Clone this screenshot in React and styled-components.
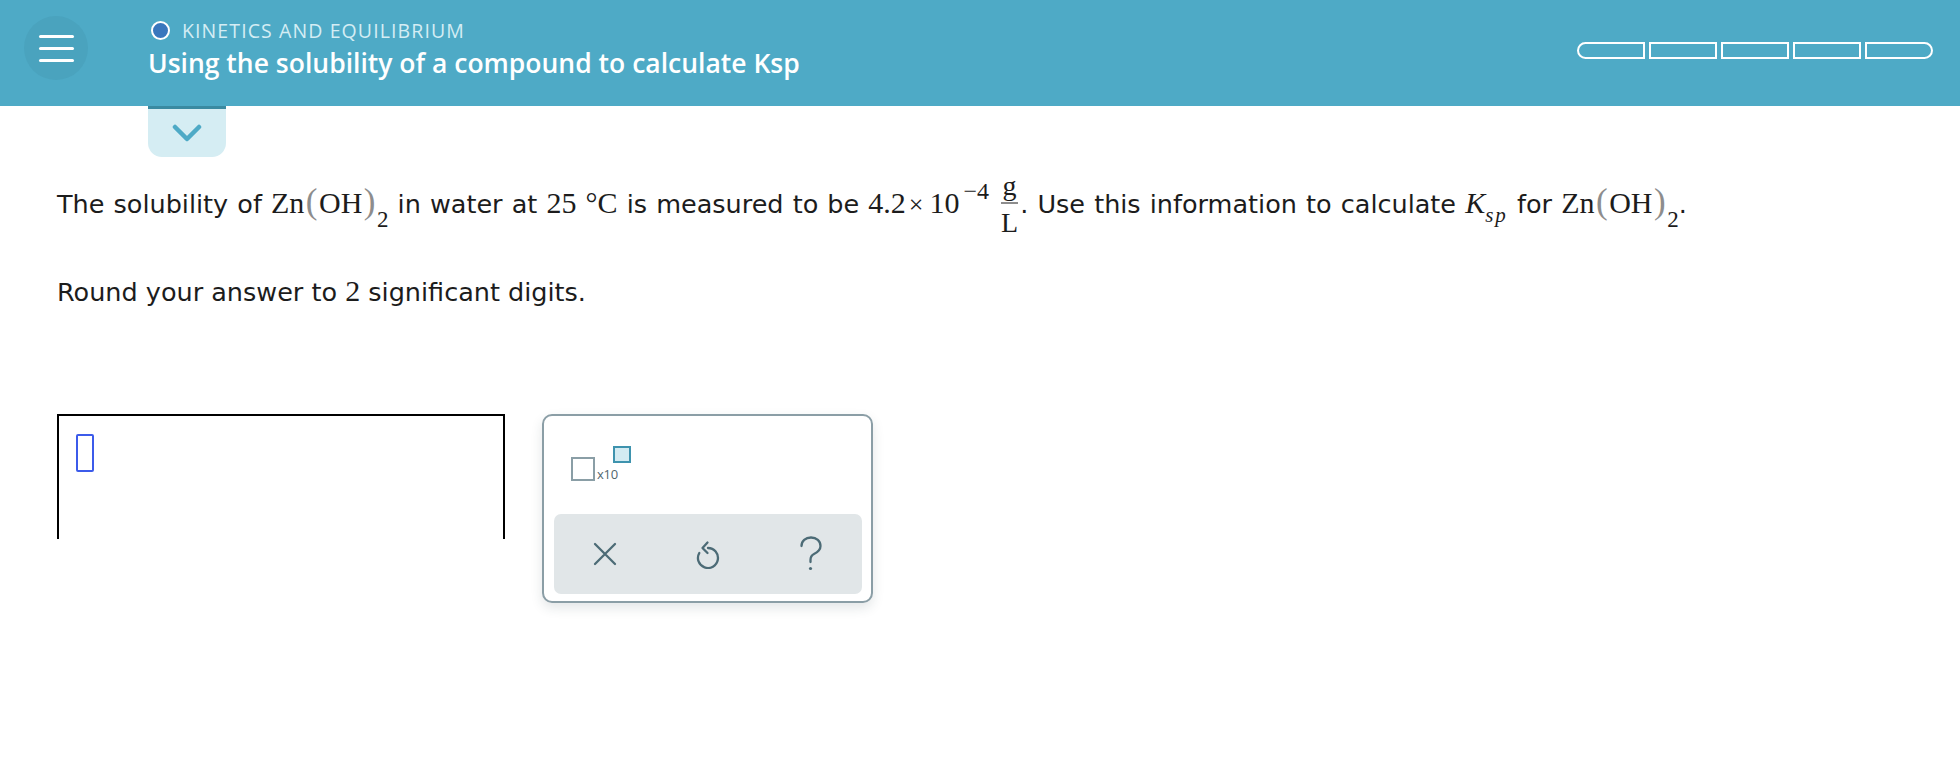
import React from "react";
import styled, { createGlobalStyle } from "styled-components";

const GlobalStyle = createGlobalStyle`
  body {
    margin: 0;
    background: #ffffff;
  }
`;

const Page = styled.div`
  width: 1960px;
  min-height: 776px;
  background: #fff;
`;

/* ---------- header ---------- */

const Header = styled.header`
  height: 106px;
  box-sizing: border-box;
  background: #4eaac6;
  display: flex;
  align-items: flex-start;
  padding: 16px 27px 0 24px;
`;

const MenuButton = styled.button`
  width: 64px;
  height: 64px;
  flex-shrink: 0;
  border: 0;
  padding: 0;
  border-radius: 50%;
  background: #4aa3be;
  display: flex;
  flex-direction: column;
  align-items: center;
  justify-content: center;
  gap: 9px;
`;

const MenuLine = styled.span`
  display: block;
  width: 35px;
  height: 3px;
  border-radius: 2px;
  background: #fff;
`;

const TitleBlock = styled.div`
  margin-left: 60px;
  padding-top: 5px;
  font-family: "Open Sans", Lato, sans-serif;
`;

const Crumb = styled.div`
  display: flex;
  align-items: center;
  gap: 12px;
  height: 19px;
  font-size: 19.5px;
  font-weight: 500;
  letter-spacing: 1.1px;
  line-height: 19px;
  color: #d4edf4;
  text-transform: uppercase;
  margin-left: 3px;
`;

const Dot = styled.span`
  width: 15px;
  height: 15px;
  flex-shrink: 0;
  border-radius: 50%;
  background: #3977bd;
  border: 2px solid #fff;
`;

const Title = styled.h1`
  margin: 6px 0 0;
  font-size: 26.5px;
  font-weight: 600;
  line-height: 34px;
  color: #fff;
`;

const Progress = styled.div`
  margin-left: auto;
  margin-top: 26px;
  display: flex;
  gap: 4px;
`;

const Segment = styled.span`
  width: 68px;
  height: 17px;
  box-sizing: border-box;
  border: 2px solid #fff;
  border-radius: ${(p) =>
    p.$first ? "9px 0 0 9px" : p.$last ? "0 9px 9px 0" : "0"};
`;

const Tab = styled.div`
  margin-left: 148px;
  width: 78px;
  height: 51px;
  box-sizing: border-box;
  background: #d5edf3;
  border-top: 3px solid #3a8aa1;
  border-radius: 0 0 14px 14px;
  display: flex;
  align-items: center;
  justify-content: center;
`;

/* ---------- question ---------- */

const Content = styled.main`
  padding: 27px 56px 0 57px;
  color: #1c1c1c;
  font-family: "DejaVu Sans", Verdana, sans-serif;
  font-size: 25.5px;
`;

const Para = styled.p`
  margin: ${(p) => (p.$gap ? "48px" : "0")} 0 0;
  line-height: 40px;
  white-space: nowrap;
  word-spacing: ${(p) => (p.$gap ? "0" : "1px")};
`;

const M = styled.span`
  font-family: "Liberation Serif", "Times New Roman", serif;
  font-size: 30px;
  line-height: 1;
  word-spacing: 0;
  font-style: ${(p) => (p.$italic ? "italic" : "normal")};
`;

const Paren = styled.span`
  font-size: 35px;
  color: #8d8d8d;
  margin: 0 1.5px;
`;

const Sub = styled.span`
  font-size: ${(p) => (p.$italic ? "21px" : "23px")};
  line-height: 0;
  vertical-align: ${(p) => p.$drop || "-14px"};
  font-style: ${(p) => (p.$italic ? "italic" : "normal")};
  letter-spacing: ${(p) => (p.$italic ? "2px" : "0")};
`;

const Sup = styled.span`
  font-size: 24px;
  line-height: 0;
  vertical-align: 14px;
  margin-left: 4px;
`;

const Op = styled.span`
  margin: 0 6px 0 3px;
  font-size: 26px;
`;

const Frac = styled.span`
  display: inline-flex;
  flex-direction: column;
  align-items: center;
  vertical-align: 18px;
  margin: -40px 2px -40px 12px;
  font-family: "Liberation Serif", "Times New Roman", serif;
  font-size: 28px;
  line-height: 27px;
`;

const FracBar = styled.span`
  align-self: stretch;
  height: 1.5px;
  background: #8d8d8d;
  margin: 3px 0 5px;
`;

/* ---------- answer area ---------- */

const AnswerRow = styled.div`
  display: flex;
  align-items: flex-start;
  gap: 37px;
  margin-top: 102px;
`;

const AnswerBox = styled.div`
  width: 448px;
  height: 125px;
  box-sizing: border-box;
  border: 2px solid #000;
  border-bottom: 0;
  padding: 18px 0 0 17px;
`;

const Cursor = styled.span`
  display: block;
  width: 18px;
  height: 38px;
  box-sizing: border-box;
  border: 2px solid #3c5bea;
  border-radius: 2px;
`;

const Keypad = styled.div`
  width: 331px;
  height: 189px;
  box-sizing: border-box;
  border: 2px solid #8b9ea6;
  border-radius: 10px;
  background: #fff;
  box-shadow: 0 5px 12px rgba(40, 60, 70, 0.13);
  display: flex;
  flex-direction: column;
  padding: 0 9px 7px 10px;
`;

const KeyArea = styled.div`
  flex: 1;
  padding: 30px 0 0 17px;
`;

const SciKey = styled.button`
  display: inline-flex;
  align-items: flex-start;
  border: 0;
  padding: 0;
  background: transparent;
  font-family: "Open Sans", Lato, sans-serif;
`;

const KeyBox = styled.span`
  display: block;
  box-sizing: border-box;
  width: ${(p) => (p.$small ? "18px" : "24px")};
  height: ${(p) => (p.$small ? "17px" : "24px")};
  margin-top: ${(p) => (p.$small ? "0" : "11px")};
  margin-left: ${(p) => (p.$small ? "-5px" : "0")};
  border: 2.5px solid ${(p) => (p.$small ? "#3e93ae" : "#8a9ea6")};
  background: ${(p) => (p.$small ? "#d3ebf2" : "#fff")};
`;

const KeyLabel = styled.span`
  margin: 21px 0 0 2px;
  font-size: 13px;
  line-height: 14px;
  letter-spacing: -0.3px;
  color: #51666d;
`;

const ActionBar = styled.div`
  height: 80px;
  border-radius: 7px;
  background: #e1e6e8;
  display: grid;
  grid-template-columns: repeat(3, 1fr);
  align-items: center;
  justify-items: center;
`;

const ActionButton = styled.button`
  border: 0;
  padding: 0;
  background: transparent;
  display: flex;
  color: #4c6b76;
`;

export default function App() {
  const segments = [0, 1, 2, 3, 4];
  return (
    <Page>
      <GlobalStyle />
      <Header>
        <MenuButton aria-label="menu">
          <MenuLine />
          <MenuLine />
          <MenuLine />
        </MenuButton>
        <TitleBlock>
          <Crumb>
            <Dot />
            Kinetics and Equilibrium
          </Crumb>
          <Title>Using the solubility of a compound to calculate Ksp</Title>
        </TitleBlock>
        <Progress>
          {segments.map((s) => (
            <Segment key={s} $first={s === 0} $last={s === segments.length - 1} />
          ))}
        </Progress>
      </Header>
      <Tab>
        <svg width="30" height="19" viewBox="0 0 30 19">
          <path
            d="M3 3 L15 15 L27 3"
            fill="none"
            stroke="#4eaac6"
            strokeWidth="4.5"
            strokeLinecap="round"
            strokeLinejoin="round"
          />
        </svg>
      </Tab>
      <Content>
        <Para>
          The solubility of{" "}
          <M>
            Zn<Paren>(</Paren>OH<Paren>)</Paren>
            <Sub>2</Sub>
          </M>{" "}
          in water at <M>25</M> <M>°C</M> is measured to be{" "}
          <M>
            4.2<Op>×</Op>10<Sup>−4</Sup>
          </M>
          <Frac>
            <span>g</span>
            <FracBar />
            <span>L</span>
          </Frac>
          . Use this information to calculate{" "}
          <M $italic>
            K<Sub $italic $drop="-9px">sp</Sub>
          </M>{" "}
          for{" "}
          <M>
            Zn<Paren>(</Paren>OH<Paren>)</Paren>
            <Sub>2</Sub>
          </M>
          .
        </Para>
        <Para $gap>
          Round your answer to <M>2</M> significant digits.
        </Para>
        <AnswerRow>
          <AnswerBox>
            <Cursor />
          </AnswerBox>
          <Keypad>
            <KeyArea>
              <SciKey aria-label="scientific notation">
                <KeyBox />
                <KeyLabel>x10</KeyLabel>
                <KeyBox $small />
              </SciKey>
            </KeyArea>
            <ActionBar>
              <ActionButton aria-label="clear">
                <svg width="24" height="24" viewBox="0 0 24 24">
                  <path
                    d="M2 2 L22 22 M22 2 L2 22"
                    stroke="currentColor"
                    strokeWidth="2.3"
                    strokeLinecap="round"
                  />
                </svg>
              </ActionButton>
              <ActionButton aria-label="undo">
                <svg width="26" height="30" viewBox="0 0 26 30">
                  <path
                    d="M13 9 A10 10 0 1 1 4.3 14"
                    fill="none"
                    stroke="currentColor"
                    strokeWidth="2.3"
                    strokeLinecap="round"
                  />
                  <path
                    d="M12.5 3.5 L7.5 9 L12.5 14"
                    fill="none"
                    stroke="currentColor"
                    strokeWidth="2.3"
                    strokeLinecap="round"
                    strokeLinejoin="round"
                  />
                </svg>
              </ActionButton>
              <ActionButton aria-label="help">
                <svg width="22" height="36" viewBox="0 0 22 36">
                  <path
                    d="M1.5 10 C1.5 5 5.5 1.5 11 1.5 C16.5 1.5 20.5 5 20.5 10 C20.5 14.5 17 16.5 14 18 C11.5 19.3 10.5 21 10.5 24 L10.5 26"
                    fill="none"
                    stroke="currentColor"
                    strokeWidth="2.3"
                    strokeLinecap="round"
                  />
                  <circle cx="10.5" cy="32.5" r="1.6" fill="currentColor" />
                </svg>
              </ActionButton>
            </ActionBar>
          </Keypad>
        </AnswerRow>
      </Content>
    </Page>
  );
}
